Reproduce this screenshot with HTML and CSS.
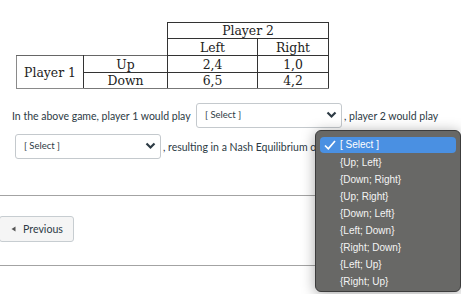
FILE: index.html
```html
<!DOCTYPE html>
<html lang="en">
<head>
    <meta charset="UTF-8">
    <meta name="viewport" content="width=device-width, initial-scale=1.0">
    <title>Quiz Question</title>
    <link rel="stylesheet" href="styles.css">
</head>
<body>
    <div class="content">
        <table class="game">
            <colgroup>
                <col class="c1"><col class="c2"><col class="c3"><col class="c4">
            </colgroup>
            <tr class="r1">
                <td class="blank" colspan="2" rowspan="2"></td>
                <td colspan="2">Player 2</td>
            </tr>
            <tr class="r2">
                <td>Left</td>
                <td>Right</td>
            </tr>
            <tr class="r3">
                <td class="p1" rowspan="2">Player 1</td>
                <td>Up</td>
                <td>2,4</td>
                <td>1,0</td>
            </tr>
            <tr class="r4">
                <td>Down</td>
                <td>6,5</td>
                <td>4,2</td>
            </tr>
        </table>

        <p class="question">In the above game, player 1 would play <span class="select"><span class="select-text">[ Select ]</span><svg class="chev" width="11" height="8" viewBox="0 0 11 8"><path d="M1.5 1.5 L5.5 5.5 L9.5 1.5" fill="none" stroke="#2d3b45" stroke-width="2.2"/></svg></span>, player 2 would play <span class="select"><span class="select-text">[ Select ]</span><svg class="chev" width="11" height="8" viewBox="0 0 11 8"><path d="M1.5 1.5 L5.5 5.5 L9.5 1.5" fill="none" stroke="#2d3b45" stroke-width="2.2"/></svg></span>, resulting in a Nash Equilibrium of</p>
    </div>

    <hr class="rule">
    <div class="nav">
        <button class="prev"><svg width="5" height="6" viewBox="0 0 5 6"><path d="M4.5 0.5 L0.5 3 L4.5 5.5 Z" fill="#555"/></svg>Previous</button>
    </div>
    <hr class="rule">

    <ul class="menu">
        <li class="active"><svg class="check" width="12" height="10" viewBox="0 0 12 10"><path d="M1 5.5 L4.3 8.8 L11 1" fill="none" stroke="#fff" stroke-width="1.7"/></svg>[ Select ]</li>
        <li>{Up; Left}</li>
        <li>{Down; Right}</li>
        <li>{Up; Right}</li>
        <li>{Down; Left}</li>
        <li>{Left; Down}</li>
        <li>{Right; Down}</li>
        <li>{Left; Up}</li>
        <li>{Right; Up}</li>
    </ul>
</body>
</html>
```

FILE: styles.css
```css
body {
    margin: 0;
    background: #fff;
    font-family: Lato, "Liberation Sans", sans-serif;
    color: #2d3b45;
    overflow: hidden;
}
.content {
    padding: 0 12px;
}
.game {
    margin: 22px 0 0 4px;
    border-collapse: collapse;
    table-layout: fixed;
    width: 312px;
    font-family: "DejaVu Serif", serif;
    font-size: 12.4px;
    color: #222;
}
.game .c1 { width: 67px; }
.game .c2 { width: 84px; }
.game .c3 { width: 90px; }
.game .c4 { width: 71px; }
.game td {
    border: 1px solid #333;
    padding: 0;
    text-align: center;
    line-height: 15px;
}
.game .r1 { height: 16px; }
.game .r2 { height: 17px; }
.game .r3 { height: 17px; }
.game .r4 { height: 16px; }
.game .blank {
    border: none;
}
.game .p1 {
    border-left-color: #8a8a8a;
    border-bottom-color: #8a8a8a;
}
.game .r3 td {
    border-top-color: #666;
}
.game .r4 td {
    border-bottom-color: #777;
}
.question {
    margin: 12px 0 0;
    font-size: 10.5px;
    line-height: 31px;
}
.select {
    display: inline-flex;
    align-items: center;
    justify-content: space-between;
    box-sizing: border-box;
    width: 146px;
    height: 25px;
    margin: 0 2px 0 3px;
    padding: 0 4px 0 8px;
    border: 1px solid #c4c9cd;
    border-radius: 3px;
    background: #fff;
    vertical-align: 2px;
    line-height: 12px;
}
.select-text {
    font-size: 9.5px;
    color: #2d3b45;
}
.chev {
    display: block;
}
.rule {
    margin: 32px 0 0;
    border: 0;
    border-top: 1px solid #a3a3a3;
    height: 0;
}
.nav {
    padding: 20px 0 23px;
}
.nav + .rule {
    margin-top: 0;
}
.prev {
    display: flex;
    align-items: center;
    gap: 7px;
    height: 26px;
    margin-left: -1px;
    padding: 0 10px 0 11px;
    border: 1px solid #c7cdd1;
    border-radius: 3px;
    background: #f5f5f5;
    font-family: Lato, "Liberation Sans", sans-serif;
    font-size: 10.6px;
    color: #2d3b45;
}
.menu {
    position: absolute;
    left: 315px;
    top: 130px;
    width: 146px;
    height: 162px;
    box-sizing: border-box;
    margin: 0;
    padding: 5px 4px;
    list-style: none;
    background: #686866;
    border: 1px solid #3c3c3c;
    border-radius: 6px;
    box-shadow: 0 2px 14px rgba(0, 0, 0, 0.35);
    font-family: "Liberation Sans", Arial, sans-serif;
    font-size: 10px;
    color: #f4f4f4;
}
.menu li {
    position: relative;
    height: 17px;
    line-height: 17px;
    padding-left: 20px;
    border-radius: 4px;
}
.menu .active {
    background: #4a90e2;
    color: #fff;
    height: 16px;
    line-height: 16px;
    margin-bottom: 1px;
    margin-top: 1px;
}
.check {
    position: absolute;
    left: 4px;
    top: 3px;
}
```
